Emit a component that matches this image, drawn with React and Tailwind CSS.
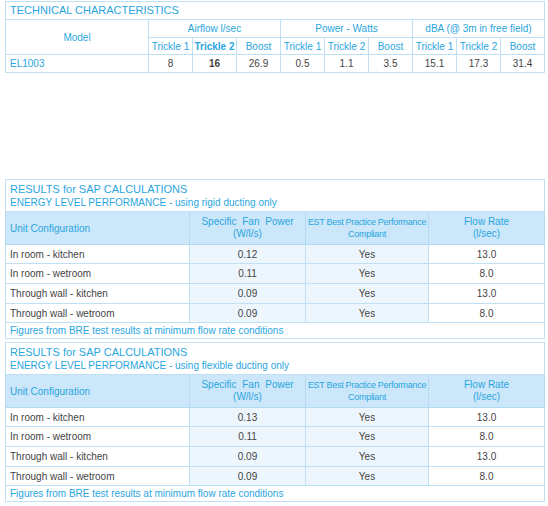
import React from "react";

const font = { fontFamily: '"Liberation Sans", Arial, sans-serif' };

const sapRigid = [
  ["In room - kitchen", "0.12", "Yes", "13.0"],
  ["In room - wetroom", "0.11", "Yes", "8.0"],
  ["Through wall - kitchen", "0.09", "Yes", "13.0"],
  ["Through wall - wetroom", "0.09", "Yes", "8.0"],
];

const sapFlexible = [
  ["In room - kitchen", "0.13", "Yes", "13.0"],
  ["In room - wetroom", "0.11", "Yes", "8.0"],
  ["Through wall - kitchen", "0.09", "Yes", "13.0"],
  ["Through wall - wetroom", "0.09", "Yes", "8.0"],
];

function TechTable() {
  const sub = ["Trickle 1", "Trickle 2", "Boost"];
  const values = ["8", "16", "26.9", "0.5", "1.1", "3.5", "15.1", "17.3", "31.4"];
  return (
    <table className="ml-[5px] mt-[1px] w-[540px] table-fixed border-collapse text-[10px]">
      <colgroup>
        <col className="w-[143px]" />
        {values.map((_, i) => (
          <col key={i} />
        ))}
      </colgroup>
      <tbody>
        <tr className="h-[18px]">
          <td colSpan={10} className="border border-[#bfe0f5] px-[4px] text-left text-[11px] text-[#2aa6df]">
            TECHNICAL CHARACTERISTICS
          </td>
        </tr>
        <tr className="h-[18px]">
          <td rowSpan={2} className="border border-[#bfe0f5] text-center text-[#2aa6df]">
            Model
          </td>
          <td colSpan={3} className="border border-[#bfe0f5] text-center text-[#2aa6df]">
            Airflow l/sec
          </td>
          <td colSpan={3} className="border border-[#bfe0f5] text-center text-[#2aa6df]">
            Power - Watts
          </td>
          <td colSpan={3} className="border border-[#bfe0f5] text-center text-[#2aa6df]">
            dBA (@ 3m in free field)
          </td>
        </tr>
        <tr className="h-[17px]">
          {[0, 1, 2].map((g) =>
            sub.map((s, i) => (
              <td
                key={g + s}
                className={`border border-[#bfe0f5] text-center text-[#2aa6df] ${g === 0 && i === 1 ? "font-bold" : ""}`}
              >
                {s}
              </td>
            ))
          )}
        </tr>
        <tr className="h-[18px]">
          <td className="border border-[#bfe0f5] px-[4px] text-left text-[#2aa6df]">EL1003</td>
          {values.map((v, i) => (
            <td
              key={i}
              className={`border border-[#bfe0f5] text-center text-[#444] ${i === 1 ? "font-bold text-[#222]" : ""}`}
            >
              {v}
            </td>
          ))}
        </tr>
      </tbody>
    </table>
  );
}

function SapTable({ ducting, rows, className }) {
  return (
    <table className={`ml-[5px] w-[540px] table-fixed border-collapse text-[10px] ${className}`}>
      <colgroup>
        <col className="w-[184px]" />
        <col className="w-[116px]" />
        <col className="w-[123px]" />
        <col />
      </colgroup>
      <tbody>
        <tr className="h-[32px]">
          <td colSpan={4} className="border border-[#bfe0f5] px-[4px] pt-[1px] text-[#2aa6df]">
            <div className="text-[11px] leading-[13px]">RESULTS for SAP CALCULATIONS</div>
            <div className="leading-[14px]">ENERGY LEVEL PERFORMANCE - using {ducting} ducting only</div>
          </td>
        </tr>
        <tr className="h-[33px] bg-[#cce7f9] text-[#2aa6df]">
          <td className="border border-[#b3daf3] px-[4px] text-left">Unit Configuration</td>
          <td className="border border-[#b3daf3] px-[4px] text-center leading-[12px] [word-spacing:3px]">
            Specific Fan Power
            <br />
            (W/l/s)
          </td>
          <td className="border border-[#b3daf3] text-center text-[9px] leading-[12px] tracking-[-0.3px]">
            EST Best Practice Performance
            <br />
            Compliant
          </td>
          <td className="border border-[#b3daf3] text-center leading-[12px]">
            Flow Rate
            <br />
            (l/sec)
          </td>
        </tr>
        {rows.map((r, i) => (
          <tr key={i} className={`${i === 0 || i === 3 ? "h-[19px]" : "h-[20px]"} text-[#444]`}>
            <td className="border border-[#bfe0f5] px-[4px] text-left">{r[0]}</td>
            <td className="border border-[#bfe0f5] bg-[#eef6fd] text-center">{r[1]}</td>
            <td className="border border-[#bfe0f5] bg-[#eef6fd] text-center">{r[2]}</td>
            <td className="border border-[#bfe0f5] text-center">{r[3]}</td>
          </tr>
        ))}
        <tr className="h-[14px]">
          <td colSpan={4} className="border border-[#bfe0f5] px-[4px] text-left text-[#2aa6df]">
            Figures from BRE test results at minimum flow rate conditions
          </td>
        </tr>
      </tbody>
    </table>
  );
}

export default function App() {
  return (
    <div className="h-[506px] w-[548px] bg-white" style={font}>
      <TechTable />
      <SapTable ducting="rigid" rows={sapRigid} className="mt-[106px]" />
      <SapTable ducting="flexible" rows={sapFlexible} className="mt-[3px]" />
    </div>
  );
}
